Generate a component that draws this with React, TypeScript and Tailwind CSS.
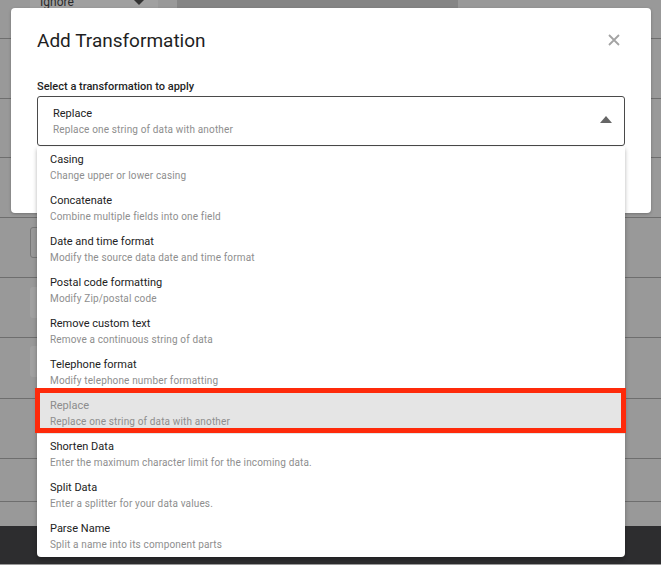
import React from "react";

const items = [
  { t: "Casing", d: "Change upper or lower casing" },
  { t: "Concatenate", d: "Combine multiple fields into one field" },
  { t: "Date and time format", d: "Modify the source data date and time format" },
  { t: "Postal code formatting", d: "Modify Zip/postal code" },
  { t: "Remove custom text", d: "Remove a continuous string of data" },
  { t: "Telephone format", d: "Modify telephone number formatting" },
  { t: "Replace", d: "Replace one string of data with another", active: true },
  { t: "Shorten Data", d: "Enter the maximum character limit for the incoming data." },
  { t: "Split Data", d: "Enter a splitter for your data values." },
  { t: "Parse Name", d: "Split a name into its component parts" },
];

function BgRow({ h, children }: { h: string; children?: React.ReactNode }) {
  return <div className={`${h} border-b border-[#6e6e6e] relative`}>{children}</div>;
}

export default function App() {
  return (
    <div
      className="relative w-[661px] h-[565px] overflow-hidden bg-[#999999]"
      style={{ fontFamily: "Roboto, 'Noto Sans', sans-serif" }}
    >
      {/* background page */}
      <div className="flex flex-col">
        <div className="h-[39px] border-b border-[#6e6e6e] flex items-start">
          <div className="ml-[30px] w-[128px] h-[30px] bg-[#a0a0a0] flex items-start justify-between pl-[10px] pr-[13px] -mt-[5px]">
            <span className="text-[12px] leading-[14px] text-[#2a2a2a]">Ignore</span>
            <span className="mt-[4px] w-0 h-0 border-l-[6px] border-r-[6px] border-t-[6px] border-l-transparent border-r-transparent border-t-[#333]" />
          </div>
          <div className="ml-[19px] w-[281px] h-[30px] bg-[#858585]" />
        </div>
        <BgRow h="h-[60px]" />
        <BgRow h="h-[59px]" />
        <BgRow h="h-[60px]">
          <div className="ml-[30px] mt-[10px] w-[40px] h-[30px] bg-[#a1a1a1] rounded-[3px]" />
        </BgRow>
        <BgRow h="h-[60px]">
          <div className="ml-[30px] mt-[9px] w-[40px] h-[31px] border border-[#777] rounded-[3px]" />
        </BgRow>
        <BgRow h="h-[60px]">
          <div className="ml-[30px] mt-[9px] w-[40px] h-[31px] bg-[#a1a1a1] rounded-[3px]" />
        </BgRow>
        <BgRow h="h-[61px]">
          <div className="ml-[30px] mt-[8px] w-[40px] h-[31px] bg-[#a1a1a1] rounded-[3px]" />
        </BgRow>
        <BgRow h="h-[60px]" />
        <BgRow h="h-[43px]" />
        <div className="h-[24px]" />
        <div className="h-[38px] bg-[#2d2d2f]" />
      </div>

      {/* modal */}
      <div className="absolute left-[11px] top-[8px] w-[640px] h-[205px] bg-white rounded-[4px] shadow-[0_1px_3px_rgba(0,0,0,0.25)]">
        <div className="flex items-start justify-between pl-[26px] pr-[31px] pt-[21px]">
          <h1 className="text-[19px] leading-[24px] text-[#1f1f1f] font-normal">Add Transformation</h1>
          <svg width="12" height="12" viewBox="0 0 12 12" className="mt-[5px]">
            <path d="M1 1 L11 11 M11 1 L1 11" stroke="#a3a3a3" strokeWidth="1.8" />
          </svg>
        </div>
        <div className="pl-[26px] pr-[26px] mt-[27px]">
          <div className="text-[11px] leading-[13px] font-medium text-[#1f1f1f]">
            Select a transformation to apply
          </div>
          <div className="relative mt-[3px]">
            <div className="h-[50px] w-[588px] border border-[#4a4a4a] rounded-[3px] flex items-center justify-between pl-[15px] pr-[12px]">
              <div className="flex flex-col">
                <span className="text-[11px] leading-[13px] text-[#222]">Replace</span>
                <span className="mt-[4px] text-[10px] leading-[12px] text-[#8e8e8e] tracking-[0.15px]">
                  Replace one string of data with another
                </span>
              </div>
              <span className="w-0 h-0 border-l-[6px] border-r-[6px] border-b-[7px] border-l-transparent border-r-transparent border-b-[#666] -mt-[4px]" />
            </div>

            {/* dropdown menu */}
            <div className="absolute left-0 top-[51px] w-[588px] bg-white rounded-b-[4px] shadow-[0_2px_4px_rgba(0,0,0,0.3)] z-10">
              {items.map((it) => (
                <div
                  key={it.t}
                  className={`h-[41px] pl-[13px] pt-[6px] flex flex-col ${it.active ? "bg-[#e5e5e5]" : ""}`}
                >
                  <span className={`text-[11px] leading-[13px] ${it.active ? "text-[#8c8c8c]" : "text-[#222]"}`}>{it.t}</span>
                  <span className="mt-[4px] text-[10px] leading-[12px] text-[#8e8e8e] tracking-[0.15px]">{it.d}</span>
                </div>
              ))}
              {/* red annotation box */}
              <div className="absolute left-[-2px] top-[241px] w-[591px] h-[45px] border-[5px] border-[#fe2a0a] pointer-events-none" />
            </div>
          </div>
        </div>
      </div>
    </div>
  );
}
